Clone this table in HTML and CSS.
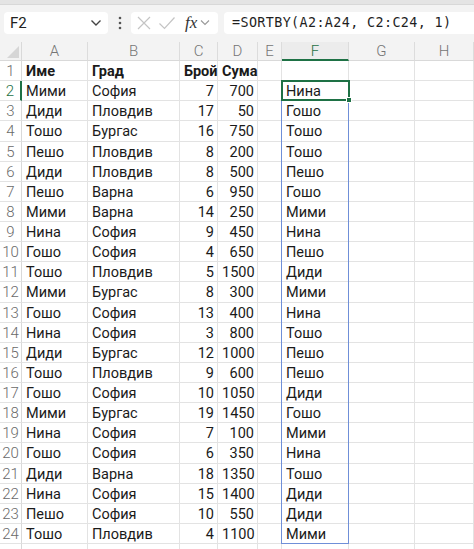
FILE: index.html
```html
<!DOCTYPE html>
<html lang="bg">
<head>
<meta charset="utf-8">
<link rel="stylesheet" href="styles.css">
</head>
<body>
<div class="app">
  <div class="topstrip"></div>
  <div class="toolbar">
    <div class="namebox">
      <span class="ref">F2</span>
      <svg class="chev" width="12" height="8" viewBox="0 0 12 8"><path d="M1.5 1.5 L6 6 L10.5 1.5" fill="none" stroke="#444" stroke-width="1.4"/></svg>
    </div>
    <div class="dots">
      <svg width="4" height="14" viewBox="0 0 4 14"><circle cx="2" cy="2" r="1.3" fill="#555"/><circle cx="2" cy="7" r="1.3" fill="#555"/><circle cx="2" cy="12" r="1.3" fill="#555"/></svg>
    </div>
    <div class="fxbox">
      <svg width="16" height="16" viewBox="0 0 16 16"><path d="M2 2 L14 14 M14 2 L2 14" stroke="#c4c4c4" stroke-width="1.2" fill="none"/></svg>
      <svg width="18" height="16" viewBox="0 0 18 16"><path d="M1.5 8.5 L6.5 13.5 L16.5 2.5" stroke="#c4c4c4" stroke-width="1.2" fill="none"/></svg>
      <span class="fx">fx</span>
      <svg class="fxchev" width="10" height="7" viewBox="0 0 10 7"><path d="M1 1.5 L5 5.5 L9 1.5" fill="none" stroke="#999" stroke-width="1.1"/></svg>
    </div>
    <div class="formula">=SORTBY(A2:A24, C2:C24, 1)</div>
  </div>
  <div class="sheet">
    <div class="corner"><span class="tri"></span></div>
    <div class="ch">A</div><div class="ch">B</div><div class="ch">C</div><div class="ch">D</div><div class="ch">E</div><div class="ch sel">F</div><div class="ch">G</div><div class="ch">H</div>

    <div class="rh">1</div><div class="c b">Име</div><div class="c b">Град</div><div class="c b">Брой</div><div class="c b">Сума</div><div class="c"></div><div class="c"></div><div class="c"></div><div class="c"></div>
    <div class="rh rsel">2</div><div class="c">Мими</div><div class="c">София</div><div class="c n">7</div><div class="c n">700</div><div class="c"></div><div class="c">Нина</div><div class="c"></div><div class="c"></div>
    <div class="rh">3</div><div class="c">Диди</div><div class="c">Пловдив</div><div class="c n">17</div><div class="c n">50</div><div class="c"></div><div class="c">Гошо</div><div class="c"></div><div class="c"></div>
    <div class="rh">4</div><div class="c">Тошо</div><div class="c">Бургас</div><div class="c n">16</div><div class="c n">750</div><div class="c"></div><div class="c">Тошо</div><div class="c"></div><div class="c"></div>
    <div class="rh">5</div><div class="c">Пешо</div><div class="c">Пловдив</div><div class="c n">8</div><div class="c n">200</div><div class="c"></div><div class="c">Тошо</div><div class="c"></div><div class="c"></div>
    <div class="rh">6</div><div class="c">Диди</div><div class="c">Пловдив</div><div class="c n">8</div><div class="c n">500</div><div class="c"></div><div class="c">Пешо</div><div class="c"></div><div class="c"></div>
    <div class="rh">7</div><div class="c">Пешо</div><div class="c">Варна</div><div class="c n">6</div><div class="c n">950</div><div class="c"></div><div class="c">Гошо</div><div class="c"></div><div class="c"></div>
    <div class="rh">8</div><div class="c">Мими</div><div class="c">Варна</div><div class="c n">14</div><div class="c n">250</div><div class="c"></div><div class="c">Мими</div><div class="c"></div><div class="c"></div>
    <div class="rh">9</div><div class="c">Нина</div><div class="c">София</div><div class="c n">9</div><div class="c n">450</div><div class="c"></div><div class="c">Нина</div><div class="c"></div><div class="c"></div>
    <div class="rh">10</div><div class="c">Гошо</div><div class="c">София</div><div class="c n">4</div><div class="c n">650</div><div class="c"></div><div class="c">Пешо</div><div class="c"></div><div class="c"></div>
    <div class="rh">11</div><div class="c">Тошо</div><div class="c">Пловдив</div><div class="c n">5</div><div class="c n">1500</div><div class="c"></div><div class="c">Диди</div><div class="c"></div><div class="c"></div>
    <div class="rh">12</div><div class="c">Мими</div><div class="c">Бургас</div><div class="c n">8</div><div class="c n">300</div><div class="c"></div><div class="c">Мими</div><div class="c"></div><div class="c"></div>
    <div class="rh">13</div><div class="c">Гошо</div><div class="c">София</div><div class="c n">13</div><div class="c n">400</div><div class="c"></div><div class="c">Нина</div><div class="c"></div><div class="c"></div>
    <div class="rh">14</div><div class="c">Нина</div><div class="c">София</div><div class="c n">3</div><div class="c n">800</div><div class="c"></div><div class="c">Тошо</div><div class="c"></div><div class="c"></div>
    <div class="rh">15</div><div class="c">Диди</div><div class="c">Бургас</div><div class="c n">12</div><div class="c n">1000</div><div class="c"></div><div class="c">Пешо</div><div class="c"></div><div class="c"></div>
    <div class="rh">16</div><div class="c">Тошо</div><div class="c">Пловдив</div><div class="c n">9</div><div class="c n">600</div><div class="c"></div><div class="c">Пешо</div><div class="c"></div><div class="c"></div>
    <div class="rh">17</div><div class="c">Гошо</div><div class="c">София</div><div class="c n">10</div><div class="c n">1050</div><div class="c"></div><div class="c">Диди</div><div class="c"></div><div class="c"></div>
    <div class="rh">18</div><div class="c">Мими</div><div class="c">Бургас</div><div class="c n">19</div><div class="c n">1450</div><div class="c"></div><div class="c">Гошо</div><div class="c"></div><div class="c"></div>
    <div class="rh">19</div><div class="c">Нина</div><div class="c">София</div><div class="c n">7</div><div class="c n">100</div><div class="c"></div><div class="c">Мими</div><div class="c"></div><div class="c"></div>
    <div class="rh">20</div><div class="c">Гошо</div><div class="c">София</div><div class="c n">6</div><div class="c n">350</div><div class="c"></div><div class="c">Нина</div><div class="c"></div><div class="c"></div>
    <div class="rh">21</div><div class="c">Диди</div><div class="c">Варна</div><div class="c n">18</div><div class="c n">1350</div><div class="c"></div><div class="c">Тошо</div><div class="c"></div><div class="c"></div>
    <div class="rh">22</div><div class="c">Нина</div><div class="c">София</div><div class="c n">15</div><div class="c n">1400</div><div class="c"></div><div class="c">Диди</div><div class="c"></div><div class="c"></div>
    <div class="rh">23</div><div class="c">Пешо</div><div class="c">София</div><div class="c n">10</div><div class="c n">550</div><div class="c"></div><div class="c">Диди</div><div class="c"></div><div class="c"></div>
    <div class="rh">24</div><div class="c">Тошо</div><div class="c">Пловдив</div><div class="c n">4</div><div class="c n">1100</div><div class="c"></div><div class="c">Мими</div><div class="c"></div><div class="c"></div>
    <div class="rh"></div><div class="c"></div><div class="c"></div><div class="c"></div><div class="c"></div><div class="c"></div><div class="c"></div><div class="c"></div><div class="c"></div>

    <div class="spill"></div>
    <div class="active"><span class="handle"></span></div>
  </div>
</div>
</body>
</html>
```

FILE: styles.css
```css
* { box-sizing: border-box; }
html, body { margin: 0; padding: 0; }
body {
  width: 474px;
  height: 549px;
  overflow: hidden;
  background: #fff;
  font-family: Roboto, "Noto Sans", sans-serif;
  color: #1a1a1a;
}
.app { display: flex; flex-direction: column; }
.topstrip {
  height: 5px;
  background: #e4e4e4;
  border-bottom: 1px solid #d8d8d8;
}
.toolbar {
  height: 37px;
  background: #f3f3f3;
  display: flex;
  align-items: center;
  padding: 4px 0 6px 4px;
}
.namebox {
  width: 104px;
  height: 22px;
  background: #fff;
  border-radius: 4px;
  display: flex;
  align-items: center;
  justify-content: space-between;
  padding: 0 6px 0 6px;
  font-size: 15px;
  color: #222;
}
.namebox .chev { margin-top: 1px; }
.dots {
  width: 23px;
  display: flex;
  justify-content: center;
  align-items: center;
}
.fxbox {
  width: 87px;
  height: 22px;
  background: #fff;
  border-radius: 4px;
  display: flex;
  align-items: center;
  gap: 6px;
  padding: 0 4px 0 5px;
}
.fx {
  font-family: "Liberation Serif", serif;
  font-style: italic;
  font-size: 17px;
  color: #333;
  margin-left: 3px;
  line-height: 1;
}
.fxchev { margin-left: -3px; }
.formula {
  flex: 1;
  height: 22px;
  margin-left: 6px;
  background: #fff;
  border-radius: 4px 0 0 4px;
  font-family: "DejaVu Sans Mono", monospace;
  font-size: 13.4px;
  letter-spacing: 0.38px;
  line-height: 22px;
  padding-left: 8px;
  color: #1f1f1f;
  white-space: nowrap;
}
.sheet {
  position: relative;
  display: grid;
  grid-template-columns: 22px 66px 92px 38px 40px 24px 67px 66px 59px;
  grid-template-rows: 19px repeat(25, 20.13px);
}
.corner {
  background: #f3f3f3;
  border-right: 1px solid #d9d9d9;
  border-bottom: 1px solid #d9d9d9;
  position: relative;
}
.tri {
  position: absolute;
  right: 2px;
  bottom: 2px;
  width: 12px;
  height: 12px;
  background: #d6d6d6;
  clip-path: polygon(100% 0, 100% 100%, 0 100%);
}
.ch {
  background: #f3f3f3;
  border-right: 1px solid #dcdcdc;
  border-bottom: 1px solid #d9d9d9;
  text-align: center;
  font-size: 15px;
  padding-top: 1px;
  line-height: 17px;
  color: #757575;
  font-weight: 300;
}
.ch.sel {
  border-bottom: 2px solid #1e7145;
  color: #1e7145;
  background: #ececec;
}
.rh {
  background: #fff;
  border-right: 1px solid #d9d9d9;
  border-bottom: 1px solid #e3e3e3;
  text-align: center;
  font-size: 15px;
  padding-top: 2px;
  line-height: 17px;
  color: #6a6a6a;
  font-weight: 300;
}
.rh.rsel {
  border-right: 2px solid #1e7145;
  color: #1e7145;
}
.c {
  border-right: 1px solid #e3e3e3;
  border-bottom: 1px solid #e3e3e3;
  font-size: 14.5px;
  padding: 2px 3px 0 4px;
  line-height: 17px;
  white-space: nowrap;
  color: #1a1a1a;
}
.c.n { text-align: right; }
.c.b { font-weight: 700; }
.spill {
  position: absolute;
  grid-column: 7 / 8;
  grid-row: 3 / 26;
  top: -1px;
  left: -1px;
  right: 0;
  bottom: 0;
  border: 1px solid #6f8fd8;
  pointer-events: none;
}
.active {
  position: absolute;
  grid-column: 7 / 8;
  grid-row: 3 / 4;
  top: -1px;
  left: -1px;
  right: -1px;
  bottom: 0;
  border: 2px solid #1e7145;
  pointer-events: none;
}
.handle {
  position: absolute;
  right: -4px;
  bottom: -4px;
  width: 6px;
  height: 6px;
  background: #1e7145;
  border: 1px solid #fff;
}
```
